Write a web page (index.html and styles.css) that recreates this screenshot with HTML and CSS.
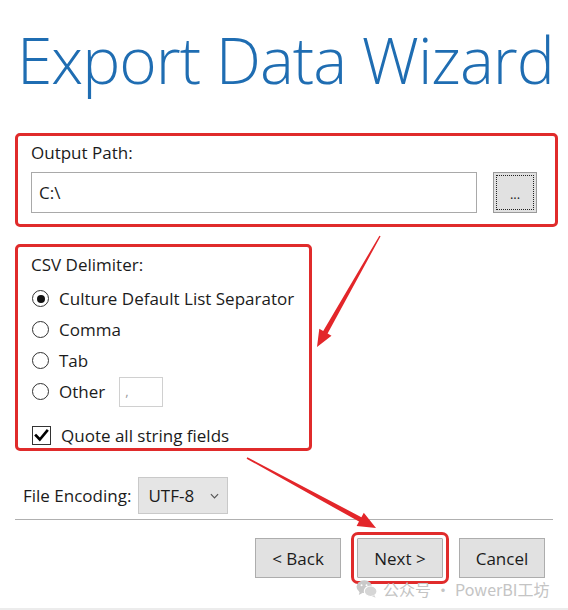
FILE: index.html
```html
<!DOCTYPE html>
<html lang="en">
<head>
<meta charset="utf-8">
<title>Export Data Wizard</title>
<link rel="stylesheet" href="styles.css">
</head>
<body>
<div class="wizard">
  <h1 class="title">Export Data Wizard</h1>

  <section class="mark-box path-box">
    <div class="label">Output Path:</div>
    <div class="path-row">
      <div class="textbox path-input">C:\</div>
      <div class="browse-btn"><span class="browse-inner">...</span></div>
    </div>
  </section>

  <section class="mark-box delim-box">
    <div class="label">CSV Delimiter:</div>
    <div class="radio-list">
      <div class="option"><span class="radio checked"></span><span class="opt-text">Culture Default List Separator</span></div>
      <div class="option"><span class="radio"></span><span class="opt-text">Comma</span></div>
      <div class="option"><span class="radio"></span><span class="opt-text">Tab</span></div>
      <div class="option"><span class="radio"></span><span class="opt-text">Other</span><span class="other-box">,</span></div>
    </div>
    <div class="option check-row">
      <span class="checkbox"><svg viewBox="0 0 19 19" width="19" height="19"><path d="M4 9.5 L7.8 13.5 L15 4.8" fill="none" stroke="#000" stroke-width="2.6" stroke-linecap="square" stroke-linejoin="miter"/></svg></span>
      <span class="opt-text">Quote all string fields</span>
    </div>
  </section>

  <div class="encoding">
    <span class="enc-label">File Encoding:</span>
    <div class="select">
      <span>UTF-8</span>
      <svg class="chev" viewBox="0 0 10 6" width="9" height="6"><path d="M1 1 L5 5 L9 1" fill="none" stroke="#555" stroke-width="1.3"/></svg>
    </div>
  </div>

  <div class="separator"></div>

  <div class="buttons">
    <button class="btn">&lt; Back</button>
    <button class="btn btn-next">Next &gt;</button>
    <button class="btn">Cancel</button>
  </div>

  <svg class="arrows" width="568" height="610" viewBox="0 0 568 610">
    <polygon fill="#e3262a" points="380.6,236.3 327.6,333.4 331.5,335.7 317,347 319.3,328.7 323.2,331.0 379.4,235.7"/>
    <polygon fill="#e3262a" points="247.4,457.3 361.4,517.2 363.8,512.8 376,528 356.6,526.0 359.0,521.6 246.6,458.7"/>
  </svg>

  <div class="watermark">
    <svg class="wm-icon" viewBox="0 0 24 22" width="22" height="20">
      <ellipse cx="9" cy="8.5" rx="8.5" ry="7" fill="#c9c9c9"/>
      <path d="M4 13.5 L3 17.5 L7.5 15 Z" fill="#c9c9c9"/>
      <ellipse cx="16" cy="13.5" rx="7" ry="5.8" fill="#d6d6d6" stroke="#fff" stroke-width="1.2"/>
      <path d="M20 17.5 L21.5 20.5 L17.5 19 Z" fill="#d6d6d6"/>
      <circle cx="6" cy="7" r="1.1" fill="#fff"/>
      <circle cx="11.5" cy="7" r="1.1" fill="#fff"/>
    </svg>
    <span class="wm-text">公众号<span class="wm-dot">·</span>PowerBI工坊</span>
  </div>
</div>
</body>
</html>
```

FILE: styles.css
```css
* { box-sizing: border-box; }

html, body {
  margin: 0;
  padding: 0;
  background: #ffffff;
}

body {
  font-family: "Open Sans", "Noto Sans", "Noto Sans CJK SC", sans-serif;
  font-size: 17px;
  color: #1b1b1b;
}

.wizard {
  position: relative;
  width: 568px;
  height: 610px;
  overflow: hidden;
  border-bottom: 2px solid #ececec;
}

.title {
  margin: 0;
  padding: 16px 0 0 17px;
  height: 104px;
  font-weight: 300;
  font-size: 64px;
  line-height: 88px;
  color: #1f6db2;
  letter-spacing: -1px;
  white-space: nowrap;
}

.mark-box {
  margin-left: 15px;
  border: 3px solid #e02b2b;
  border-radius: 5px;
}

.label {
  line-height: 20px;
  height: 20px;
}

.path-box {
  margin-top: 29px;
  width: 543px;
  height: 94px;
  padding: 7px 18px 11px 13px;
}

.path-row {
  display: flex;
  gap: 16px;
  margin-top: 9px;
}

.textbox {
  border: 1px solid #a9a9a9;
  background: #fff;
}

.path-input {
  flex: 1;
  height: 41px;
  padding-left: 7px;
  line-height: 39px;
}

.browse-btn {
  width: 44px;
  height: 41px;
  background: #e1e1e1;
  border: 1px solid #9a9a9a;
  padding: 2px;
}

.browse-inner {
  display: flex;
  align-items: flex-end;
  justify-content: center;
  width: 100%;
  height: 100%;
  border: 1px dotted #222;
  font-size: 13px;
  line-height: 1;
  padding-bottom: 8px;
}

.delim-box {
  margin-top: 17px;
  width: 297px;
  height: 207px;
  padding: 8px 0 0 13px;
}

.radio-list {
  margin-top: 8px;
}

.option {
  display: flex;
  align-items: center;
  height: 31px;
  padding-left: 1px;
  white-space: nowrap;
}

.radio {
  width: 17px;
  height: 17px;
  border: 1px solid #333;
  border-radius: 50%;
  display: flex;
  align-items: center;
  justify-content: center;
  flex: none;
}

.radio.checked::after {
  content: "";
  width: 8px;
  height: 8px;
  border-radius: 50%;
  background: #111;
}

.opt-text {
  margin-left: 10px;
}

.other-box {
  margin-left: 14px;
  width: 44px;
  height: 30px;
  border: 1px solid #d0d0d0;
  color: #999;
  font-size: 13px;
  padding-left: 5px;
  line-height: 26px;
}

.check-row {
  margin-top: 15px;
  height: 26px;
}

.checkbox {
  width: 19px;
  height: 19px;
  border: 1px solid #333;
  flex: none;
  display: flex;
}

.checkbox svg {
  margin: -1px;
}

.encoding {
  display: flex;
  align-items: center;
  margin-top: 26px;
  padding-left: 23px;
  height: 37px;
}

.select {
  margin-left: 7px;
  width: 90px;
  height: 37px;
  background: #e5e5e5;
  border: 1px solid #c9c9c9;
  display: flex;
  align-items: center;
  padding-left: 9px;
}

.select .chev {
  margin-left: 16px;
}

.separator {
  margin: 5px 15px 0 15px;
  height: 1px;
  background: #b0b0b0;
}

.buttons {
  display: flex;
  justify-content: flex-end;
  gap: 16px;
  margin-top: 18px;
  padding-right: 23px;
}

.btn {
  width: 86px;
  height: 40px;
  background: #e1e1e1;
  border: 1px solid #adadad;
  font-family: inherit;
  font-size: 17px;
  color: #1b1b1b;
  padding: 0;
}

.btn-next {
  outline: 3px solid #e02b2b;
  outline-offset: 3px;
  border-radius: 1px;
}

.arrows {
  position: absolute;
  left: 0;
  top: 0;
  pointer-events: none;
}

.watermark {
  position: absolute;
  left: 356px;
  top: 577px;
  display: flex;
  align-items: center;
  gap: 5px;
  color: #c4c4c4;
  font-size: 16px;
}

.wm-text {
  font-family: "Noto Sans CJK SC", sans-serif;
}

.wm-dot {
  margin: 0 4px;
}
```
